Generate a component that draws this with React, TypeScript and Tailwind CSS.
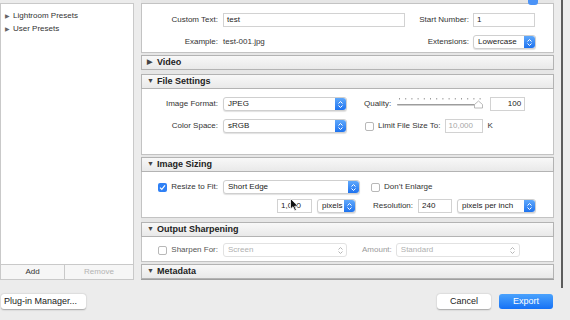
import React from 'react';

function Stepper({ disabled }: { disabled?: boolean }) {
  if (disabled) {
    return (
      <div className="w-[12px] h-full flex items-center justify-center">
        <svg width="7" height="9" viewBox="0 0 7 9">
          <path d="M1.5 3.5 L3.5 1.5 L5.5 3.5" fill="none" stroke="#b5b5b5" strokeWidth="1" />
          <path d="M1.5 5.5 L3.5 7.5 L5.5 5.5" fill="none" stroke="#b5b5b5" strokeWidth="1" />
        </svg>
      </div>
    );
  }
  return (
    <div className="w-[11px] h-full flex items-center justify-center rounded-r-[3px] bg-gradient-to-b from-[#5fa8fb] to-[#1c72ef]">
      <svg width="7" height="9" viewBox="0 0 7 9">
        <path d="M1.5 3.5 L3.5 1.5 L5.5 3.5" fill="none" stroke="#fff" strokeWidth="1" />
        <path d="M1.5 5.5 L3.5 7.5 L5.5 5.5" fill="none" stroke="#fff" strokeWidth="1" />
      </svg>
    </div>
  );
}

function Select({ value, w, disabled }: { value: string; w: string; disabled?: boolean }) {
  return (
    <div
      className={`${w} h-[14px] flex items-center rounded-[3px] bg-white border ${
        disabled ? 'border-[#e2e2e2] text-[#b0b0b0]' : 'border-[#cfcfcf] shadow-[0_1px_1px_rgba(0,0,0,0.12)] text-[#222]'
      }`}
    >
      <span className="flex-1 pl-[4px] text-[8px] leading-none whitespace-nowrap overflow-hidden">{value}</span>
      <Stepper disabled={disabled} />
    </div>
  );
}

function Input({ value, w, right, muted }: { value: string; w: string; right?: boolean; muted?: boolean }) {
  return (
    <div
      className={`${w} h-[14px] flex items-center px-[3px] bg-white border border-[#d2d2d2] text-[8px] leading-none ${
        right ? 'justify-end' : ''
      } ${muted ? 'text-[#a8a8a8]' : 'text-[#222]'}`}
    >
      {value}
    </div>
  );
}

function Check({ checked }: { checked?: boolean }) {
  if (checked) {
    return (
      <div className="w-[9px] h-[9px] rounded-[2px] bg-[#2f80f5] flex items-center justify-center">
        <svg width="7" height="7" viewBox="0 0 7 7">
          <path d="M1 3.6 L2.8 5.4 L6 1.4" fill="none" stroke="#fff" strokeWidth="1.2" />
        </svg>
      </div>
    );
  }
  return <div className="w-[9px] h-[9px] rounded-[2px] bg-white border border-[#b8b8b8]" />;
}

function Header({ title, open, mt }: { title: string; open?: boolean; mt: string }) {
  return (
    <div
      className={`${mt} h-[15px] shrink-0 flex items-center border border-[#b3b3b3] bg-gradient-to-b from-[#f8f8f8] to-[#e9e9e9] text-[9px] font-bold text-[#222]`}
    >
      <span className="w-[15px] pl-[5px] text-[7px] text-[#444]">{open ? '▼' : '▶'}</span>
      <span>{title}</span>
    </div>
  );
}

function Label({ text, w, muted }: { text: string; w: string; muted?: boolean }) {
  return (
    <div className={`${w} text-right text-[8px] leading-none ${muted ? 'text-[#9a9a9a]' : 'text-[#333]'}`}>
      {text}
    </div>
  );
}

function Slider() {
  const ticks = Array.from({ length: 14 }, (_, i) => 3 + i * 6.2);
  return (
    <svg width="88" height="13" viewBox="0 0 88 13">
      {ticks.map((x, i) => (
        <rect key={i} x={x} y="2" width="1" height="1.5" fill="#9a9a9a" />
      ))}
      <rect x="1" y="8" width="82" height="1.5" rx="0.7" fill="#9d9d9d" />
      <path d="M80.5 12 L80.5 8.5 L84.5 5 L88.5 8.5 L88.5 12 Z" fill="#fff" stroke="#a9a9a9" strokeWidth="0.8" transform="translate(-2 0)" />
    </svg>
  );
}

export default function App() {
  return (
    <div className="relative w-[570px] h-[320px] bg-[#ececec] font-['Liberation_Sans',Arial,sans-serif] overflow-hidden">
      <div className="flex h-[288px]">
        {/* presets column */}
        <div className="w-[134px] h-[280px] pt-[3px] flex flex-col">
          <div className="flex-1 bg-white border border-[#c9c9c9] pt-[5px] text-[8px] text-[#333] leading-none">
            <div className="flex items-center h-[13px] pl-[4px]">
              <span className="text-[6px] text-[#666] w-[8px]">▶</span>
              Lightroom Presets
            </div>
            <div className="flex items-center h-[13px] pl-[4px]">
              <span className="text-[6px] text-[#666] w-[8px]">▶</span>
              User Presets
            </div>
          </div>
          <div className="h-[15px] flex border border-t-0 border-[#c9c9c9] bg-[#f6f6f6] text-[8px] leading-none">
            <div className="w-[64px] flex items-center justify-center border-r border-[#c9c9c9] text-[#333]">Add</div>
            <div className="flex-1 flex items-center justify-center text-[#b3b3b3]">Remove</div>
          </div>
        </div>

        {/* export settings panel */}
        <div className="ml-[7px] w-[413px] h-[280px] pt-[3px] flex flex-col bg-[#e6e6e6] border-b border-[#9f9f9f] overflow-hidden">
          {/* file naming body (scrolled) */}
          <div className="relative h-[50px] shrink-0 bg-white border border-[#c3c3c3]">
            <div className="absolute right-[15px] -top-[4px] w-[10px] h-[5px] rounded-b-[3px] bg-[#4b93f7]" />
            <div className="flex items-center mt-[9px]">
              <Label text="Custom Text:" w="w-[76px]" />
              <div className="ml-[5px]">
                <Input value="test" w="w-[182px]" />
              </div>
              <Label text="Start Number:" w="w-[64px]" />
              <div className="ml-[4px]">
                <Input value="1" w="w-[62px]" />
              </div>
            </div>
            <div className="flex items-center mt-[8px]">
              <Label text="Example:" w="w-[76px]" />
              <div className="ml-[5px] w-[182px] text-[8px] text-[#333] leading-none">test-001.jpg</div>
              <Label text="Extensions:" w="w-[64px]" />
              <div className="ml-[4px]">
                <Select value="Lowercase" w="w-[63px]" />
              </div>
            </div>
          </div>

          <Header title="Video" mt="mt-[2px]" />

          <Header title="File Settings" open mt="mt-[4px]" />
          <div className="h-[66px] shrink-0 bg-white border border-t-0 border-[#c3c3c3]">
            <div className="flex items-center mt-[8px]">
              <Label text="Image Format:" w="w-[76px]" />
              <div className="ml-[5px]">
                <Select value="JPEG" w="w-[124px]" />
              </div>
              <div className="ml-[17px] text-[8px] text-[#333] leading-none">Quality:</div>
              <div className="ml-[5px] mt-[-3px]">
                <Slider />
              </div>
              <div className="ml-[6px]">
                <Input value="100" w="w-[35px]" right />
              </div>
            </div>
            <div className="flex items-center mt-[8px]">
              <Label text="Color Space:" w="w-[76px]" />
              <div className="ml-[5px]">
                <Select value="sRGB" w="w-[124px]" />
              </div>
              <div className="ml-[18px]">
                <Check />
              </div>
              <div className="ml-[4px] text-[8px] text-[#333] leading-none">Limit File Size To:</div>
              <div className="ml-[4px]">
                <Input value="10,000" w="w-[38px]" muted />
              </div>
              <div className="ml-[5px] text-[8px] text-[#333] leading-none">K</div>
            </div>
          </div>

          <Header title="Image Sizing" open mt="mt-[2px]" />
          <div className="h-[46px] shrink-0 bg-white border border-t-0 border-[#c3c3c3]">
            <div className="flex items-center mt-[8px]">
              <div className="w-[76px] flex items-center justify-end gap-[4px]">
                <Check checked />
                <span className="text-[8px] text-[#333] leading-none">Resize to Fit:</span>
              </div>
              <div className="ml-[5px]">
                <Select value="Short Edge" w="w-[137px]" />
              </div>
              <div className="ml-[11px]">
                <Check />
              </div>
              <div className="ml-[4px] text-[8px] text-[#333] leading-none">Don’t Enlarge</div>
            </div>
            <div className="flex items-center mt-[5px]">
              <div className="ml-[135px]">
                <Input value="1,000" w="w-[35px]" />
              </div>
              <div className="ml-[5px]">
                <Select value="pixels" w="w-[39px]" />
              </div>
              <div className="ml-[17px] text-[8px] text-[#333] leading-none">Resolution:</div>
              <div className="ml-[5px]">
                <Input value="240" w="w-[34px]" />
              </div>
              <div className="ml-[5px]">
                <Select value="pixels per inch" w="w-[79px]" />
              </div>
            </div>
          </div>

          <Header title="Output Sharpening" open mt="mt-[4px]" />
          <div className="h-[25px] shrink-0 bg-white border border-t-0 border-[#c3c3c3]">
            <div className="flex items-center mt-[6px]">
              <div className="w-[76px] flex items-center justify-end gap-[4px]">
                <Check />
                <span className="text-[8px] text-[#555] leading-none">Sharpen For:</span>
              </div>
              <div className="ml-[5px]">
                <Select value="Screen" w="w-[124px]" disabled />
              </div>
              <div className="ml-[15px] text-[8px] text-[#9a9a9a] leading-none">Amount:</div>
              <div className="ml-[4px]">
                <Select value="Standard" w="w-[124px]" disabled />
              </div>
            </div>
          </div>

          <Header title="Metadata" open mt="mt-[2px]" />
        </div>

        {/* scroll edge */}
        <div className="ml-[7px] w-[2px] h-[288px] bg-[#5c5c5c]" />
      </div>

      {/* bottom buttons */}
      <div className="flex items-center mt-[6px] text-[9px] leading-none">
        <div className="ml-[1px] w-[85px] h-[15px] flex items-center pl-[3px] bg-white rounded-[3px] shadow-[0_0.5px_1.5px_rgba(0,0,0,0.3)] text-[#222]">
          Plug-in Manager...
        </div>
        <div className="ml-auto w-[54px] h-[15px] flex items-center justify-center bg-white rounded-[3px] shadow-[0_0.5px_1.5px_rgba(0,0,0,0.3)] text-[#222]">
          Cancel
        </div>
        <div className="ml-[8px] mr-[17px] w-[54px] h-[15px] flex items-center justify-center rounded-[3px] bg-gradient-to-b from-[#4aa2fd] to-[#1471f5] text-white">
          Export
        </div>
      </div>

      {/* mouse pointer */}
      <svg className="absolute left-[290px] top-[198px]" width="9" height="14" viewBox="0 0 9 14">
        <path d="M0.5 0.5 L0.5 11 L3 8.7 L4.8 12.8 L6.4 12.1 L4.7 8.2 L8 8.2 Z" fill="#111" stroke="#fff" strokeWidth="0.8" />
      </svg>
    </div>
  );
}
